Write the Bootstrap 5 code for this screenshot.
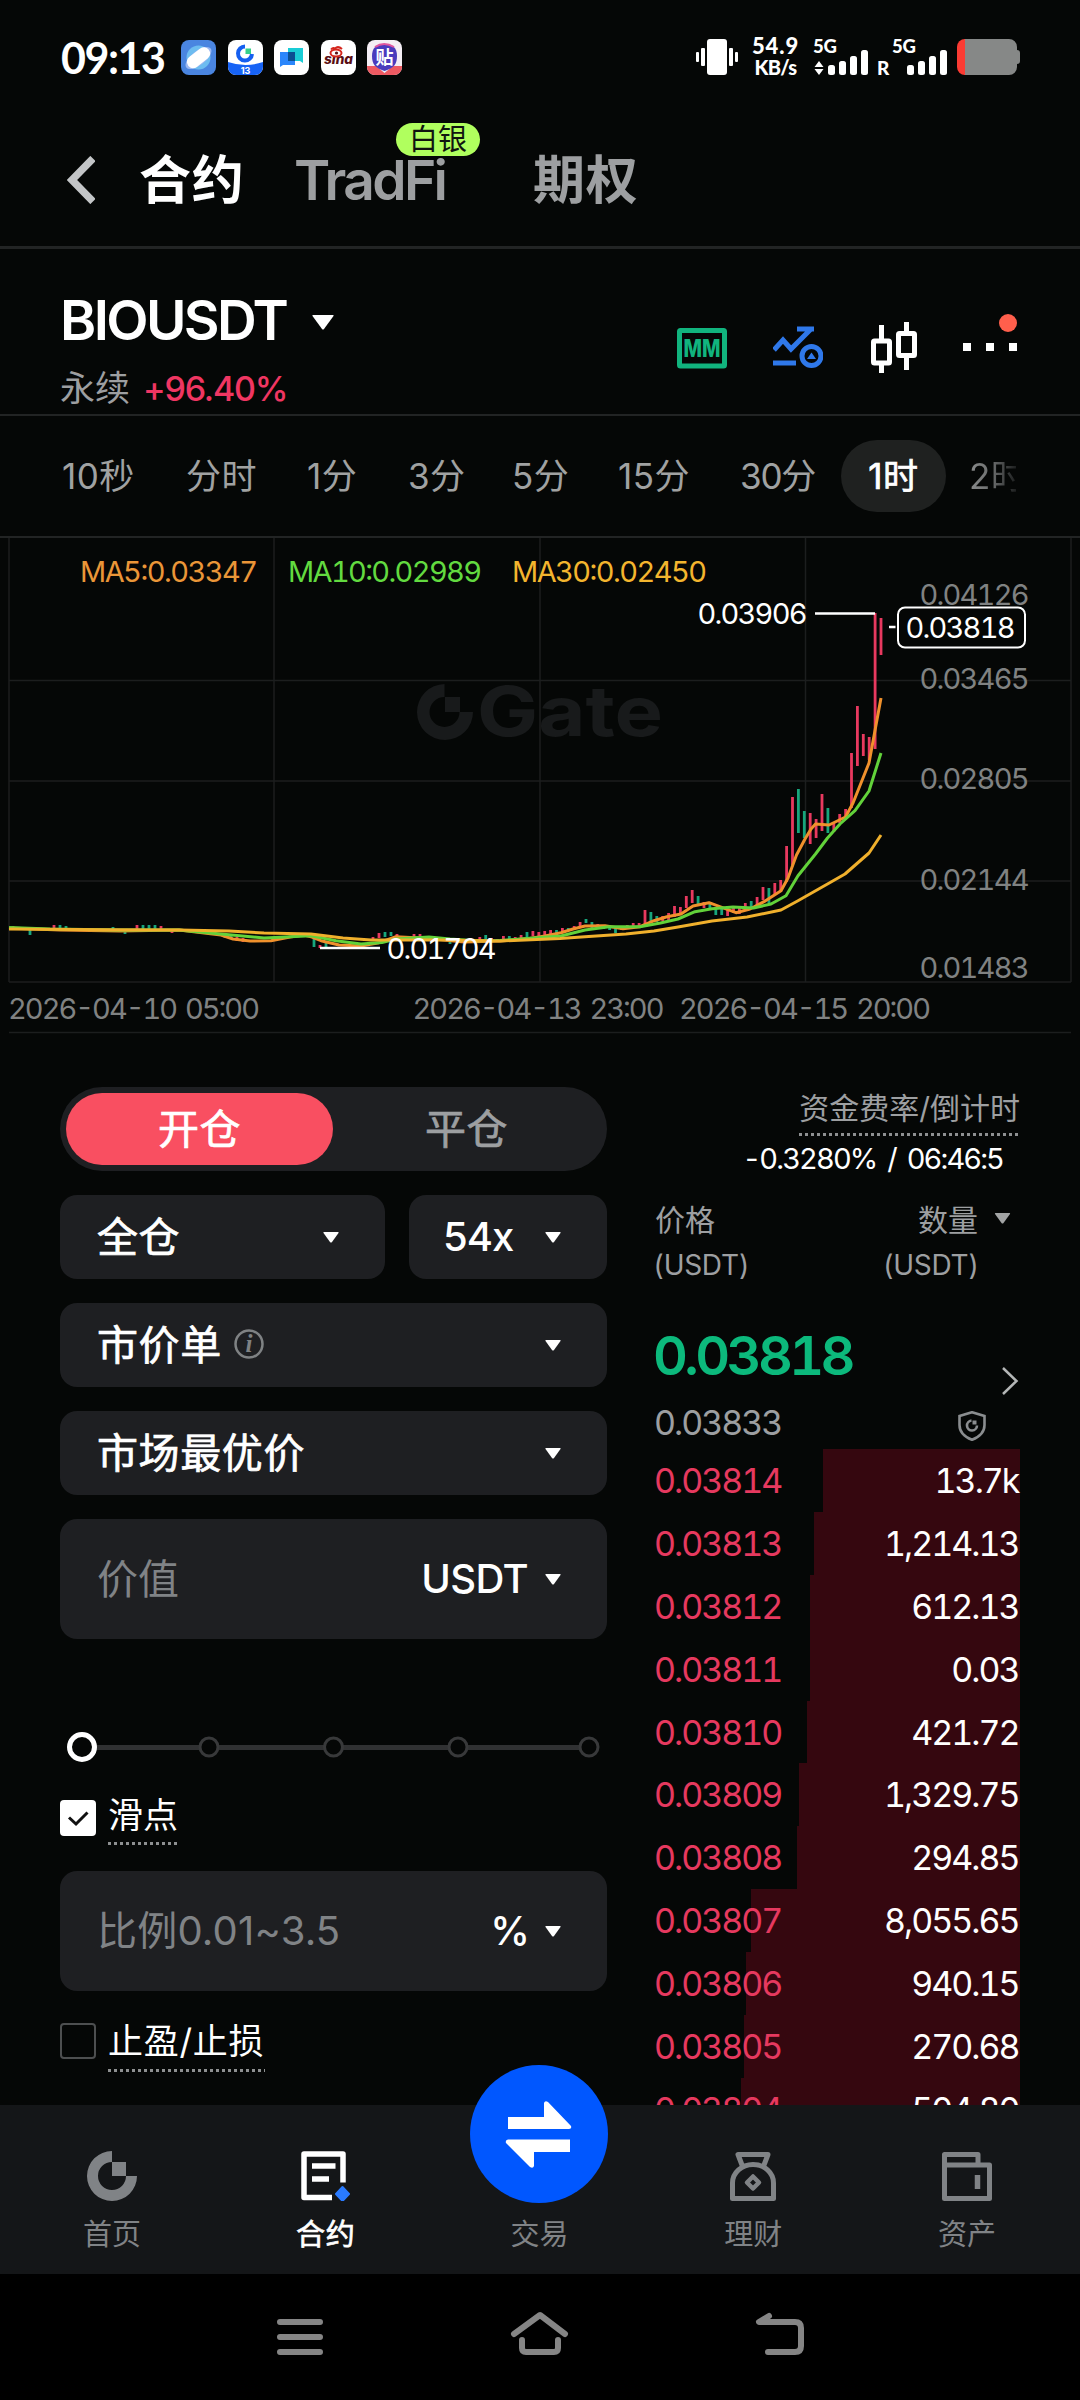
<!DOCTYPE html>
<html lang="zh-CN" data-bs-theme="dark">
<head>
<meta charset="utf-8">
<meta name="viewport" content="width=device-width, initial-scale=1">
<title>BIOUSDT 永续</title>
<link href="https://cdn.jsdelivr.net/npm/bootstrap@5.3.0/dist/css/bootstrap.min.css" rel="stylesheet">
<script src="https://cdn.jsdelivr.net/npm/bootstrap@5.3.0/dist/js/bootstrap.bundle.min.js"></script>
<style>
  :root{--ink:#fff;--dim:#9d9fa1;--mute:#808386;--line:#222424;--field:#1e1f22;--up:#0cb97c;--down:#e6395f}
  body{width:1080px;height:2400px;overflow:hidden;background:#050706;color:var(--ink);font-family:Inter,"Noto Sans CJK SC",sans-serif;line-height:1}
  svg{display:block;flex:none}
  svg text{font-family:Inter,"Noto Sans CJK SC",sans-serif}
  .tn{font-variant-numeric:tabular-nums}
  .medium{-webkit-text-stroke:.7px currentColor;letter-spacing:.6px}
  .dim{color:var(--dim)} .mute{color:var(--mute)}

  .statusbar{height:114px;padding:0 60px 0 61px}
  .statusbar svg{overflow:visible}
  .clock{font:700 43px/1 Lato,sans-serif;letter-spacing:-1.5px;width:120px}
  .netspeed{font-family:Lato,sans-serif;font-weight:900;width:61px;text-align:center}
  .netspeed .num{font-size:22px;line-height:22px;letter-spacing:.9px;margin-top:-3px}
  .netspeed .unit{font-size:20px;line-height:20px;letter-spacing:-.6px}

  .topnav{height:135px;border-bottom:3px solid var(--line);padding-left:67px}
  .topnav .item{font-size:52px;line-height:60px;white-space:nowrap;letter-spacing:.8px}
  .topnav .tradfi{font-size:55px;font-weight:600;letter-spacing:-2.2px}
  .silver{position:absolute;left:101px;top:-27px;width:84px;height:33px;border-radius:17px;background:#b0ff5e;color:#101510;font-size:29px;line-height:33px;text-align:center;font-weight:400;letter-spacing:0}

  .symbol{height:167px;border-bottom:2px solid var(--line);padding:0 61px 0 60px}
  .pair{font-size:55px;font-weight:600;letter-spacing:-2.6px;line-height:62px;margin-top:40px}
  .chg{font-size:34px;font-weight:500;letter-spacing:-1.2px;color:#f03662}
  .sub{font-size:35px;line-height:34px;margin-top:20px}
  .tools{padding-top:63px}

  .tabs{height:122px;border-bottom:2px solid var(--line);padding-left:62px;font-size:35px;color:#a0a2a2;width:1080px;overflow:hidden;letter-spacing:.5px}
  .tabs span{white-space:nowrap}
  .tabs .cur{width:105px;height:72px;line-height:72px;border-radius:36px;background:#1f2120;color:#fff;text-align:center}
  .fade-out{background:linear-gradient(90deg,#8a8c8c 0,#6a6c6c 50%,#1d1f1f 100%);-webkit-background-clip:text;background-clip:text;color:transparent;width:47px;overflow:hidden}

  .trade{height:1018px;padding:0 60px;overflow:hidden}
  .order{width:547px}
  .seg{height:84px;border-radius:42px;background:var(--field);padding:6px;font-size:41px}
  .seg div{width:267px;text-align:center;line-height:72px}
  .seg .on{height:72px;border-radius:36px;background:#f94f61}
  .box{background:var(--field);border-radius:17px;height:84px;padding:0 46px 0 37px;font-size:41px;margin-top:24px}
  .box.tall{height:120px}
  .lat{font-size:40px;font-weight:500;letter-spacing:-1px}
  .tick{width:36px;height:36px}
  .dots{font-size:35px;line-height:36px;background:repeating-linear-gradient(90deg,#8e9091 0 3px,transparent 3px 6px) bottom left/100% 3px no-repeat}

  .book{width:365px}
  .fund{font-size:30px;line-height:36px;color:var(--dim)}
  .ask{height:62.9px;position:relative;font-size:34px;line-height:63px;letter-spacing:-2px;padding-right:1.5px}
  .ask .depth{position:absolute;right:0;top:0;height:63px;background:#35070f}
  .ask span{position:relative}
  .ask .p{color:var(--down);margin-left:-1px}

  .tabbar{height:169px;background:#141618;padding:0 6px 0 5px;position:relative}
  .tabbar a{width:20%;text-decoration:none;color:var(--mute);font-size:29px}
  .tabbar a svg{margin:46px auto 0}
  .tabbar a div{margin-top:17px;line-height:34px;text-align:center}
  .tabbar .act{color:#fff}
  .fab{position:absolute;left:470px;top:-40px}
  .sysbar{height:126px;background:#000}
</style>
</head>
<body>

<header class="statusbar d-flex align-items-center">
  <div class="clock">09:13</div>
  <div class="d-flex" style="gap:11.6px">
    <svg width="35" height="35" viewBox="0 0 35 35"><rect width="35" height="35" rx="8" fill="#4a85e0"/><circle cx="17.500" cy="17.500" r="12" fill="#6dbcf0"/><ellipse cx="17.500" cy="18" rx="15.500" ry="7" fill="#9db9f2" transform="rotate(-38 17.500 18)"/><rect x="4.500" y="11.500" width="26" height="12.500" rx="6" fill="#fff" transform="rotate(-38 17.500 17.700)"/></svg>
    <svg width="35" height="35" viewBox="0 0 35 35"><rect width="35" height="35" rx="8" fill="#fff"/><path d="M0 22Q17.500 28 35 22V27a8 8 0 0 1-8 8H8a8 8 0 0 1-8-8Z" fill="#1763f5"/><path d="M17 6.500A7 7 0 1 0 24 14" fill="none" stroke="#155ff0" stroke-width="4"/><rect x="17.500" y="8.500" width="5.500" height="5.500" fill="#35d08c"/><text x="17.500" y="33.500" font-size="9" font-weight="700" fill="#fff" text-anchor="middle">13</text></svg>
    <svg width="35" height="35" viewBox="0 0 35 35"><rect width="35" height="35" rx="8" fill="#fff"/><path d="M14 8H29V23l-3-2H14Z" fill="#19ccd6"/><path d="M6 12H21V25H9l-3 2Z" fill="#2b86fb"/><path d="M14 12h7v9h-7Z" fill="#0b4f92"/></svg>
    <svg width="35" height="35" viewBox="0 0 35 35"><rect width="35" height="35" rx="8" fill="#fff"/><text x="17.500" y="24" font-size="13" font-weight="800" font-style="italic" fill="#5a0f14" text-anchor="middle" textLength="29" lengthAdjust="spacingAndGlyphs">sına</text><ellipse cx="15" cy="13" rx="5.500" ry="3.500" fill="none" stroke="#d5271e" stroke-width="2"/><circle cx="15.500" cy="13" r="1.600" fill="#5a0f14"/><path d="M10 9.500Q12 7 14 8.500Q17 5.500 21 9" fill="none" stroke="#d5271e" stroke-width="2"/></svg>
    <svg width="35" height="35" viewBox="0 0 35 35"><rect width="35" height="35" rx="8" fill="#f4eef4"/><path d="M0 26h35v1a8 8 0 0 1-8 8H8a8 8 0 0 1-8-8Z" fill="#ee5a62"/><path d="M8 25h19l-9.500 8Z" fill="#e9f4fb"/><path d="M17.500 4C26 4 30 8 30 16s-3 12-12.500 15C8 28 5 24 5 16S9 4 17.500 4Z" fill="#4a3bbd"/><path d="M8 7q9-6 19 0" fill="none" stroke="#e0559f" stroke-width="2"/><text x="17.500" y="23.500" font-size="18" fill="#fff" text-anchor="middle" font-weight="700">贴</text></svg>
  </div>
  <div class="d-flex align-items-center ms-auto">
    <svg width="42" height="36" viewBox="0 0 42 36" fill="#fff" style="margin-right:1px"><rect x="10" width="20" height="36" rx="3"/><rect x="-1" y="13" width="3" height="10" rx="1"/><rect x="4" y="9" width="4" height="18" rx="1"/><rect x="32" y="9" width="4" height="18" rx="1"/><rect x="38" y="13" width="3" height="10" rx="1"/></svg>
    <div class="netspeed" style="margin:0 8px 0 5px"><div class="num">54.9</div><div class="unit">KB/s</div></div>
    <svg width="54" height="36" viewBox="0 0 54 36" fill="#fff"><text x="-1" y="14" font-size="18.500" font-weight="900" textLength="24" style="font-family:Lato">5G</text><path d="M5 22l4.500 6h-9ZM5 36l4.500-6h-9Z"/><rect x="14" y="26" width="7" height="10" rx="2.500"/><rect x="25" y="22" width="7" height="14" rx="2.500"/><rect x="36" y="17" width="7" height="19" rx="2.500"/><rect x="47" y="11" width="7" height="25" rx="2.500"/></svg>
    <svg width="69" height="36" viewBox="0 0 69 36" fill="#fff" style="margin:0 10px"><text x="-1" y="36" font-size="19" font-weight="900" style="font-family:Lato">R</text><text x="14" y="14" font-size="18.500" font-weight="900" textLength="24" style="font-family:Lato">5G</text><rect x="29" y="26" width="7" height="10" rx="2.500"/><rect x="40" y="22" width="7" height="14" rx="2.500"/><rect x="51" y="17" width="7" height="19" rx="2.500"/><rect x="62" y="11" width="7" height="25" rx="2.500"/></svg>
    <svg width="63" height="36" viewBox="0 0 63 36"><path d="M7 0H52a8 8 0 0 1 8 8v3q3 0 3 3v8q0 3-3 3v3a8 8 0 0 1-8 8H7Z" fill="#868887"/><path d="M8 0A8 8 0 0 0 0 8V28a8 8 0 0 0 8 8Z" fill="#fb3b33"/></svg>
  </div>
</header>

<nav class="topnav d-flex align-items-center">
  <svg width="28" height="48" viewBox="0 0 28 48" fill="none" stroke="#c3c5c7" stroke-width="7.500"><path d="M26 2.500L5 24L26 45.500"/></svg>
  <div class="item fw-bold" style="margin-left:44px;width:104px;padding-top:2px">合约</div>
  <div class="item tradfi dim position-relative" style="margin-left:52px;width:156px"><svg width="156" height="60" style="overflow:visible" role="img"><text x="-1" y="50" textLength="154" font-size="55" font-weight="600" fill="#9d9fa1" letter-spacing="0">TradFi</text></svg><span class="silver">白银</span></div>
  <div class="item fw-bold dim" style="margin-left:82px;padding-top:2px">期权</div>
</nav>

<section class="symbol d-flex justify-content-between">
  <div>
    <div class="d-flex align-items-center pair"><span>BIOUSDT</span><svg width="22" height="15" viewBox="0 0 22 15" fill="#fff" style="margin-left:26px;margin-top:4px"><path d="M1 0H21Q22 0 21.500 1L12 14Q11 15 10 14L.5 1Q0 0 1 0Z"/></svg></div>
    <div class="sub"><span class="dim">永续</span><span class="chg" style="margin-left:13px">+96.40%</span></div>
  </div>
  <div class="tools d-flex align-items-start">
    <svg width="50" height="70" viewBox="0 0 50 70"><rect x="2.500" y="18.500" width="45" height="35.500" rx="1" fill="none" stroke="#11b47e" stroke-width="5"/><text x="6.500" y="44.500" font-size="24" font-weight="800" textLength="37" lengthAdjust="spacingAndGlyphs" fill="#11b47e">MM</text></svg>
    <svg width="50" height="70" viewBox="0 0 50 70" style="margin-left:46px" fill="none" stroke="#2f78ea" stroke-width="5"><path d="M1 38L10 28L18 37L38 17M24 17H41"/><path d="M0 51H23"/><circle cx="38.500" cy="44" r="9.500"/><path d="M34 47l4.500-6.500l4.500 6.500Z" fill="#2f78ea" stroke="none"/></svg>
    <svg width="46" height="74" viewBox="0 0 46 74" style="margin-left:48px" fill="none" stroke="#fff" stroke-width="5"><path d="M10.500 13V28M10.500 50V61M35.500 10V21M35.500 42V58"/><rect x="2.500" y="29" width="16" height="22" rx="1"/><rect x="27.500" y="21.500" width="16" height="22" rx="1"/></svg>
    <svg width="56" height="70" viewBox="0 0 56 70" style="margin-left:46px"><path d="M0 31h8v8h-8ZM23 31h8v8h-8ZM46 31h8v8h-8Z" fill="#fff"/><circle cx="45" cy="11" r="9" fill="#ff5f4c"/></svg>
  </div>
</section>

<div class="tabs d-flex align-items-center">
  <span style="width:124px">10秒</span><span style="width:121px">分时</span><span style="width:101px">1分</span><span style="width:104px">3分</span><span style="width:106px">5分</span><span style="width:122px">15分</span><span style="width:101px;letter-spacing:-1.2px">30分</span><span class="cur medium">1时</span><span class="fade-out" style="margin-left:23px">2时</span>
</div>

<!-- price chart: grid, candles and moving averages -->
<svg id="chart" width="1080" height="549" viewBox="0 538 1080 549">
  <g stroke="#1c1e1e" stroke-width="1.500" fill="none">
    <path d="M9 538V982M274 538V982M540 538V982M805.500 538V982M1071 538V982M9 680.500H1071M9 781H1071M9 881H1071M9 982H1071M9 1032.500H1071"/>
  </g>
  <g fill="#181a1b"><path d="M444.500 684A28 28 0 1 0 473 712H459.500A15 15 0 1 1 444.500 697ZM445 697H460V712H445Z"/>
    <text x="477" y="736" font-size="69" font-weight="700" textLength="186" lengthAdjust="spacingAndGlyphs">Gate</text></g>
  <g id="candles"></g>
  <g fill="none" stroke-width="3" stroke-linejoin="round">
    <path stroke="#f0912c" d="M9 928L60 930L120 931L179 930L221 935L233 939L250 941L271 940.700L290 937L304 935L312 937L321 940.700L339 945L361 946L379 942.700L396 936.700L429 938.500L464 942L500 941L529 938.500L545 936L561 932.700L573 929L585 926L605 925.700L623 928.700L640 926.700L654 920.700L667 916.700L681 914L693 906L709 902.700L722.500 907.700L736 912.700L750 909L764 901.700L781 890.700L788 878L796.500 855L805 839L811 829L815.500 824L829 825L845.500 817L853 803L869 763L881 698"/>
    <path stroke="#62d23a" d="M9 927.500L50 929L120 930L179 930L221 934L264 938L285 937L311 935.700L336 940.700L361 944L382 942.500L396 939L429 937L450 939L475 940.700L500 940.500L540 937.500L561 936L585 930L609 926.700L640 926.700L660.500 923L678 919L695 911.700L712 908.700L733 907L753.500 908L771 904L786 895.700L798 875.700L815.500 854L827.500 838L840 824L855 810.700L869 791L881 753"/>
    <path stroke="#f0b02c" d="M9 929L107 929.700L179 930L229 931L264 933L311 934L343 938L371 940L446 940L500 941L560 938.500L585 936.700L626 934L654 931L678 927L712 921L747 917L781 910L798 900.700L827.500 884L845 874L869 853L881 835"/>
  </g>
  <g stroke="#fff" stroke-width="2.500"><path d="M815 613.500H875M320 948H380M889 627H895.500"/></g>
  <g class="tn" font-size="29">
    <text x="80" y="582" fill="#ea9638" textLength="178">MA5:0.03347</text>
    <text x="288" y="582" fill="#62da40" textLength="194">MA10:0.02989</text>
    <text x="512" y="582" fill="#f3b52e" textLength="195">MA30:0.02450</text>
    <g fill="#808282" word-spacing="3">
      <text x="919.500" y="604.500" textLength="110">0.04126</text><text x="919.500" y="688.500" textLength="110">0.03465</text><text x="919.500" y="788.500" textLength="110">0.02805</text><text x="919.500" y="889.500" textLength="110">0.02144</text><text x="919.500" y="977.500" textLength="110">0.01483</text>
      <text x="8" y="1018.500" textLength="252">2026-04-10 05:00</text><text x="412.500" y="1018.500" textLength="252">2026-04-13 23:00</text><text x="679" y="1018.500" textLength="252">2026-04-15 20:00</text>
    </g>
    <rect x="898" y="607.500" width="127" height="40" rx="7" fill="#050706" stroke="#fff" stroke-width="2"/>
    <g fill="#fff"><text x="697.500" y="623.500" textLength="110">0.03906</text><text x="386.500" y="959" textLength="110">0.01704</text><text x="905.500" y="637.500" textLength="110">0.03818</text></g>
  </g>
</svg>

<main class="trade d-flex justify-content-between">
  <section class="order">
    <div class="seg d-flex"><div class="on medium">开仓</div><div class="medium dim">平仓</div></div>
    <div class="d-flex" style="gap:24px">
      <div class="box d-flex align-items-center justify-content-between" style="width:325px"><span class="medium">全仓</span><svg width="16" height="11"><use href="#cr"/></svg></div>
      <div class="box d-flex align-items-center justify-content-between flex-fill" style="padding-left:34px"><span class="lat">54x</span><svg width="16" height="11"><use href="#cr"/></svg></div>
    </div>
    <div class="box d-flex align-items-center"><span class="medium">市价单</span><svg width="30" height="30" viewBox="0 0 30 30" style="margin-left:12px;margin-top:-2px"><circle cx="15" cy="15" r="13.500" fill="none" stroke="#7f8284" stroke-width="2.500"/><text x="15" y="23" text-anchor="middle" font-size="25" font-style="italic" font-weight="700" fill="#7f8284" style="font-family:'Liberation Serif',serif">i</text></svg><svg class="ms-auto" width="16" height="11"><use href="#cr"/></svg></div>
    <div class="box d-flex align-items-center justify-content-between"><span class="medium">市场最优价</span><svg width="16" height="11"><use href="#cr"/></svg></div>
    <div class="box tall d-flex align-items-center"><span class="mute">价值</span><span class="lat ms-auto" style="margin-right:17px;letter-spacing:-.6px">USDT</span><svg width="16" height="11"><use href="#cr"/></svg></div>

    <svg width="547" height="32" viewBox="60 1731 547 32" style="margin-top:92px"><path d="M95 1747.500H589" stroke="#303132" stroke-width="5"/><g fill="#050706" stroke="#38393a" stroke-width="3"><circle cx="209" cy="1747" r="9"/><circle cx="333.500" cy="1747" r="9"/><circle cx="458" cy="1747" r="9"/><circle cx="589" cy="1747" r="9"/></g><circle cx="82" cy="1747" r="12.500" fill="#050706" stroke="#fff" stroke-width="5"/></svg>

    <div class="d-flex align-items-start" style="margin-top:34px;height:48px"><svg class="tick" viewBox="0 0 36 36" style="margin-top:3px"><rect width="36" height="36" rx="4" fill="#fff"/><path d="M9 17.500L16 24L27.500 12.500" fill="none" stroke="#111" stroke-width="3"/></svg><span class="dots" style="margin-left:12px;height:48px">滑点</span></div>
    <div class="box tall d-flex align-items-center" style="margin-top:26px"><span class="mute" style="font-size:40px;letter-spacing:.2px">比例0.01~3.5</span><span class="lat ms-auto" style="margin-right:16px">%</span><svg width="16" height="11"><use href="#cr"/></svg></div>
    <div class="d-flex align-items-start" style="margin-top:32px"><svg class="tick" viewBox="0 0 36 36"><rect x="1" y="1" width="34" height="34" rx="3" fill="none" stroke="#4d4f50" stroke-width="2"/></svg><span class="dots" style="margin-left:12px;height:49px;width:157px;white-space:nowrap;letter-spacing:.7px">止盈/止损</span></div>
  </section>

  <section class="book tn">
    <div class="text-end"><span class="fund dots d-inline-block" style="height:46px;margin-top:3px;font-size:30px">资金费率/倒计时</span></div>
    <div class="text-end" style="font-size:29px;line-height:34px;margin-top:6px;padding-right:17px;letter-spacing:-1.9px;word-spacing:5px">-0.3280% / 06:46:5</div>
    <div class="d-flex dim" style="font-size:30px;line-height:36px;margin-top:26px"><span>价格</span><span class="ms-auto">数量</span><svg width="17" height="11" style="margin:11px 9px 0 16px;color:#a2a4a4"><use href="#cr"/></svg></div>
    <div class="d-flex justify-content-between dim" style="font-size:28px;line-height:36px;margin-top:9px;padding-right:41px;letter-spacing:-.3px"><span style="margin-left:-2px">(USDT)</span><span>(USDT)</span></div>
    <div class="d-flex justify-content-between" style="height:100px;padding-top:43px"><span style="font-size:54px;font-weight:600;color:var(--up);letter-spacing:-3.6px;line-height:60px;margin-left:-2px">0.03818</span><svg width="18" height="30" viewBox="0 0 18 30" style="margin:40px 1px 0 0" fill="none" stroke="#b4b6b6" stroke-width="2.500"><path d="M2 2L15.500 15L2 28"/></svg></div>
    <div class="d-flex justify-content-between dim" style="height:66px;padding-top:15px;font-size:34px;line-height:50px;letter-spacing:-2px"><span style="margin-left:-1px">0.03833</span><svg width="28" height="30" viewBox="0 0 28 30" style="margin:13px 34px 0 0" fill="none" stroke="#8a8d8f" stroke-width="2.600"><path d="M14 1.200L26.500 5V14Q26.500 24 14 28.800Q1.500 24 1.500 14V5Z"/><path d="M13.500 9.500A5 5 0 1 0 19 14.500"/><path d="M14.500 9.500h4v4h-4Z" fill="#8a8d8f" stroke="none"/></svg></div>
    <div id="asks"></div>
  </section>
</main>

<nav class="tabbar d-flex">
  <a href="#"><svg width="50" height="50" viewBox="0 0 50 50" fill="currentColor"><path d="M25 0A25 25 0 1 0 50 25H39A14 14 0 1 1 25 11ZM25 11H39V25H25Z"/></svg><div>首页</div></a>
  <a href="#" class="act"><svg width="50" height="50" viewBox="0 0 50 50" fill="none" stroke="currentColor" stroke-width="5.500"><path d="M31 46.500H3V3H42V31.500" stroke-linejoin="round"/><path d="M11 15H34.500M11 28H28"/><path d="M41.500 36L48 43L41.500 50L35 43Z" fill="#2a7bff" stroke="#2a7bff" stroke-width="2" stroke-linejoin="round"/></svg><div class="medium">合约</div></a>
  <a href="#"><svg width="50" height="50"></svg><div>交易</div></a>
  <a href="#"><svg width="50" height="50" viewBox="0 0 50 50" fill="none" stroke="currentColor" stroke-width="5" stroke-linejoin="round"><path d="M14 14L10 3.500H40L36 14M4.500 47.500V32A20.500 18.500 0 0 1 45.500 32V47.500Z"/><path d="M25 25.500L31 31.500L25 37.500L19 31.500Z" stroke-width="4.500"/></svg><div>理财</div></a>
  <a href="#"><svg width="50" height="50" viewBox="0 0 50 50" fill="none" stroke="currentColor" stroke-width="5" stroke-linejoin="round"><path d="M2.500 14V3.500H36V14M2.500 14H47.500V47.500H2.500Z"/><path d="M35.500 24V38" stroke-width="5.500"/></svg><div>资产</div></a>
  <svg class="fab" width="138" height="138" viewBox="0 0 138 138"><circle cx="69" cy="69" r="69" fill="#0057ff"/><path d="M38 52H74V38Q75 35 78 37L101 61Q102 64 99 64H38ZM100 74.500V87H64V101Q63 104 60 102L36 78Q35 75 38 74.500Z" fill="#fff"/></svg>
</nav>

<footer class="sysbar d-flex">
  <svg width="1080" height="126" viewBox="0 2274 1080 126" fill="none" stroke="#858585" stroke-width="6" stroke-linecap="round" stroke-linejoin="round"><path d="M280 2322H320M280 2337H320M280 2352H320"/><path d="M514 2334L540 2315L565 2334M522 2340V2348Q522 2352 526 2352H554Q558 2352 558 2348V2340"/><path d="M769 2316L759 2322H795Q801 2322 801 2328V2346Q801 2352 795 2352H768"/></svg>
</footer>

<svg width="0" height="0" class="position-absolute"><defs><symbol id="cr" viewBox="0 0 16 11"><path d="M1 0H15Q16 0 15.500 1L9 10Q8 11 7 10L.5 1Q0 0 1 0Z" fill="currentColor"/></symbol></defs></svg>

<script>
  // Hourly candles, newest first: [top, bottom, rising]
  const recent = [[618,655,1],[613,749,1],[737,760,1],[734,756,1],[706,766,1],[753,808,1],[809,817,1],[814,823,1],[823,832,1],[808,833,0],[794,831,1],[819,838,1],[813,844,1],[811,838,0],[789,833,0],[797,865,1],[846,882,1],[880,892,1],[883,895,1],[888,903,0],[887,900,1],[897,905,1],[901,908,0],[903,910,1],[908,914,1],[908,913,1],[910,916,1],[909,915,0],[907,915,0],[904,910,0],[902,908,1],[896,904,0],[890,903,1],[896,908,1],[907,913,1],[906,917,1],[913,920,1],[916,921,1],[916,922,0],[912,922,0],[910,925,1],[923,927,1],[923,927,1],[925,929,1],[926,930,1],[926,933,0],[925,930,0],[925,929,0],[924,928,1],[922,928,0],[919,923,0],[922,927,1],[926,930,1],[928,931,0],[928,931,1],[930,934,0],[930,935,1],[931,936,1],[932,937,1],[931,936,1],[932,937,0],[935,938,1],[937,940,1],[936,940,0],[936,940,1],[939,941,0],[938,942,1],[935,940,0],[937,942,1]];
  const early = [[13,926,930,1],[30,930,935,0],[54,925,929,1],[60,925,929,0],[66,926,930,0],[113,927,931,0],[125,930,934,0],[137,925,929,1],[143,925,929,0],[149,925,929,0],[155,925,929,0],[161,926,930,1],[172,930,933,1],[225,933,938,0],[231,935,939,0],[237,937,941,1],[243,938,942,1],[274,937,940,0],[314,939,947,0],[320,945,948,1],[326,943,947,0],[373,937,941,1],[379,933,938,1],[385,932,937,0],[391,932,936,0],[397,934,938,1],[414,934,938,1],[420,934,938,1],[426,936,939,0],[432,936,939,0],[450,941,944,0]];
  const bar = (x, t, b, up) => `<rect x="${x - 1.4}" y="${t}" width="2.8" height="${b - t}" fill="${up ? '#e8395f' : '#17a67c'}"/>`;
  document.getElementById('candles').innerHTML =
    recent.map((c, i) => bar(881 - i * 5.9, ...c)).join('') + early.map(c => bar(...c)).join('');

  // Ask side of the order book: price, amount, depth width
  const asks = [['0.03814','13.7k',197],['0.03813','1,214.13',206],['0.03812','612.13',210],['0.03811','0.03',210],['0.03810','421.72',213],['0.03809','1,329.75',221],['0.03808','294.85',223],['0.03807','8,055.65',269],['0.03806','940.15',274],['0.03805','270.68',276],['0.03804','504.80',279]];
  document.getElementById('asks').innerHTML = asks.map(([p, q, w]) =>
    `<div class="ask d-flex justify-content-between"><div class="depth" style="width:${w}px"></div><span class="p">${p}</span><span>${q}</span></div>`).join('');
</script>
</body>
</html>
